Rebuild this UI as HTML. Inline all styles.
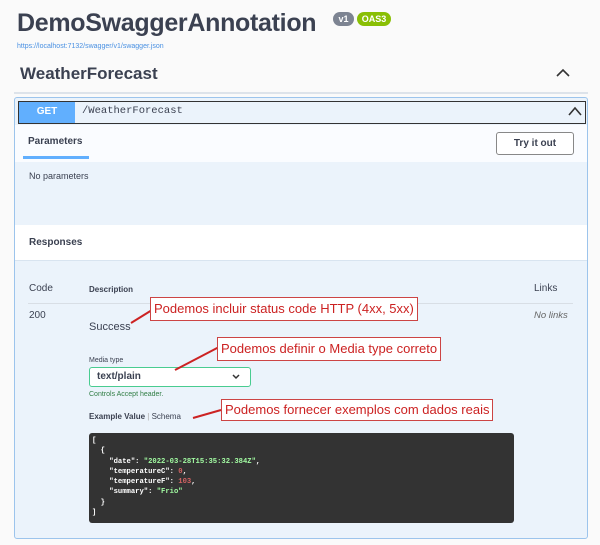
<!DOCTYPE html>
<html><head><style>
body{margin:0;width:600px;height:545px;background:#fafafa;font-family:"Liberation Sans",sans-serif;color:#3b4151;position:relative;overflow:hidden}
.a{position:absolute}
.red{position:absolute;border:1.5px solid #c44;color:#c22;font-size:13px;padding:0 3px;background:#fff;white-space:nowrap;line-height:22px}
</style></head><body>
<div class="a" style="left:17px;top:9px;font-size:25px;font-weight:bold;letter-spacing:-0.3px">DemoSwaggerAnnotation</div>
<div class="a" style="left:333px;top:12px;width:21px;height:14px;border-radius:7px;background:#7d8492;color:#fff;font-size:9px;font-weight:bold;text-align:center;line-height:14px">v1</div>
<div class="a" style="left:357px;top:12px;width:34px;height:14px;border-radius:7px;background:#89bf04;color:#fff;font-size:9px;font-weight:bold;text-align:center;line-height:14px">OAS3</div>
<div class="a" style="left:17px;top:43px;font-size:7px;color:#4990e2">https://localhost:7132/swagger/v1/swagger.json</div>
<div class="a" style="left:20px;top:64px;font-size:17px;font-weight:bold">WeatherForecast</div>
<svg class="a" style="left:556px;top:68px" width="14" height="9"><path d="M1 8L7 2L13 8" stroke="#333" stroke-width="1.6" fill="none"/></svg>
<div class="a" style="left:14px;top:92px;width:574px;height:2px;background:#dde3ea"></div>
<div class="a" style="left:14px;top:97px;width:572px;height:440px;background:#ebf3fb;border:1px solid #9cc4ec;border-radius:3px"></div>
<div class="a" style="left:18px;top:101px;width:566px;height:21px;border:1px solid #333;background:#ebf3fb"></div>
<div class="a" style="left:19px;top:102px;width:56px;height:21px;background:#61affe;color:#fff;font-size:10px;font-weight:bold;text-align:center;line-height:19px">GET</div>
<div class="a" style="left:82px;top:105px;font-family:'Liberation Mono',monospace;font-size:10.5px;color:#3b4151">/WeatherForecast</div>
<svg class="a" style="left:568px;top:106px" width="14" height="10"><path d="M1 9L7 2L13 9" stroke="#333" stroke-width="1.6" fill="none"/></svg>
<div class="a" style="left:15px;top:125px;width:572px;height:37px;background:#fafcff"></div>
<div class="a" style="left:28px;top:136px;font-size:10px;font-weight:bold">Parameters</div>
<div class="a" style="left:23px;top:156px;width:66px;height:3px;background:#61affe"></div>
<div class="a" style="left:496px;top:132px;width:76px;height:21px;border:1px solid #888;border-radius:3px;background:#fff;font-size:10px;font-weight:bold;text-align:center;line-height:21px">Try it out</div>
<div class="a" style="left:29px;top:171px;font-size:9px">No parameters</div>
<div class="a" style="left:15px;top:225px;width:572px;height:35px;background:#fff;border-bottom:1px solid #d8e4f0"></div>
<div class="a" style="left:29px;top:237px;font-size:10px;font-weight:bold">Responses</div>
<div class="a" style="left:29px;top:283px;font-size:10px">Code</div>
<div class="a" style="left:89px;top:285px;font-size:8px;font-weight:bold">Description</div>
<div class="a" style="left:534px;top:283px;font-size:10px">Links</div>
<div class="a" style="left:28px;top:303px;width:545px;height:1px;background:#d8dee5"></div>
<div class="a" style="left:29px;top:310px;font-size:10px">200</div>
<div class="a" style="left:534px;top:310px;font-size:9.5px;font-style:italic;color:#666">No links</div>
<div class="a" style="left:89px;top:321px;font-size:11px">Success</div>
<div class="a" style="left:89px;top:357px;font-size:7px">Media type</div>
<div class="a" style="left:89px;top:367px;width:160px;height:18px;border:1.5px solid #49cc90;border-radius:3px;background:#fff"></div>
<div class="a" style="left:97px;top:371px;font-size:10px;font-weight:bold">text/plain</div>
<svg class="a" style="left:232px;top:374px" width="8" height="6"><path d="M1 1L4 4L7 1" stroke="#333" stroke-width="1.5" fill="none"/></svg>
<div class="a" style="left:89px;top:391px;font-size:7px;color:#2f7d44">Controls Accept header.</div>
<div class="a" style="left:89px;top:412px;font-size:8px"><b>Example Value</b> <span style="color:#aaa">|</span> Schema</div>
<div class="a" style="left:89px;top:433px;width:425px;height:90px;background:#333;border-radius:3px"></div>
<pre class="a" style="left:92px;top:436px;margin:0;font-family:'Liberation Mono',monospace;font-size:7.2px;line-height:10.3px;color:#fff;font-weight:bold">[
  {
    "date": <span style="color:#a2fca2">"2022-03-28T15:35:32.384Z"</span>,
    "temperatureC": <span style="color:#d36363">0</span>,
    "temperatureF": <span style="color:#d36363">103</span>,
    "summary": <span style="color:#a2fca2">"Frio"</span>
  }
]</pre>
<svg class="a" style="left:0;top:0" width="600" height="545"><g stroke="#c22" stroke-width="2"><path d="M131 323L152 310"/><path d="M175 370L219 347"/><path d="M193 418L221 410"/></g></svg>
<div class="red" style="left:150px;top:297px">Podemos incluir status code HTTP (4xx, 5xx)</div>
<div class="red" style="left:217px;top:337px">Podemos definir o Media type correto</div>
<div class="red" style="left:221px;top:399px;line-height:20px">Podemos fornecer exemplos com dados reais</div>
</body></html>
